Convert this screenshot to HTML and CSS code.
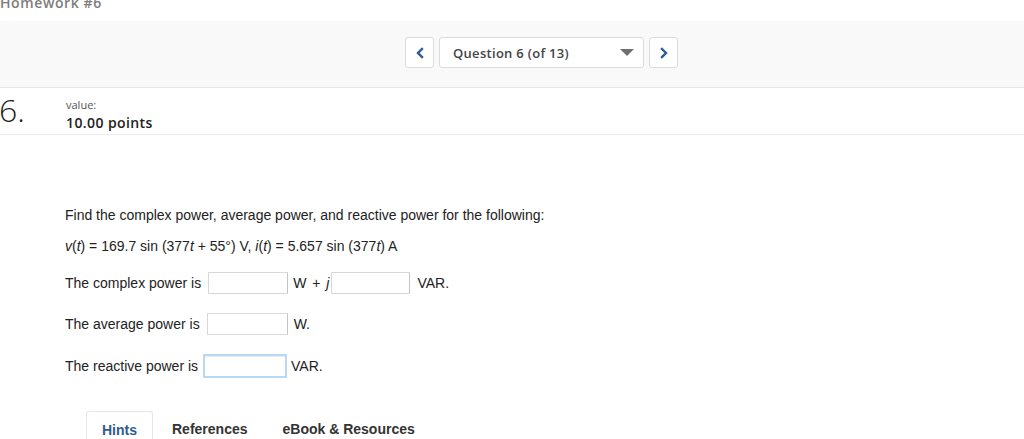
FILE: index.html
```html
<!DOCTYPE html>
<html>
<head>
<meta charset="utf-8">
<link rel="stylesheet" href="styles.css">
</head>
<body>
<div class="title"><span>Homework #6</span></div>
<div class="navband">
  <div class="nav">
    <button class="navbtn" aria-label="previous">
      <svg width="10" height="12" viewBox="0 0 10 12"><path d="M7 2 L3 6 L7 10" fill="none" stroke="#2b5c95" stroke-width="2.4" stroke-linecap="square"/></svg>
    </button>
    <div class="select">
      <span>Question 6 (of 13)</span>
      <svg class="caret" width="14" height="8" viewBox="0 0 14 8"><path d="M0 0 H14 L7 7 Z" fill="#6f6f6f"/></svg>
    </div>
    <button class="navbtn" aria-label="next">
      <svg width="10" height="12" viewBox="0 0 10 12"><path d="M3 2 L7 6 L3 10" fill="none" stroke="#2b5c95" stroke-width="2.4" stroke-linecap="square"/></svg>
    </button>
  </div>
</div>
<div class="qhead">
  <div class="qnum">6.</div>
  <div class="qval">
    <div class="vlabel">value:</div>
    <div class="points">10.00 points</div>
  </div>
</div>
<div class="qbody">
  <p class="line1">Find the complex power, average power, and reactive power for the following:</p>
  <p class="line2"><i>v</i>(<i>t</i>) = 169.7 sin (377<i>t</i> + 55°) V, <i>i</i>(<i>t</i>) = 5.657 sin (377<i>t</i>) A</p>
  <div class="row r1"><span>The complex power is</span><input class="inp c1"><span class="u1">W + <i>j</i></span><input class="inp c2"><span class="u2">VAR.</span></div>
  <div class="row r2"><span>The average power is</span><input class="inp a1"><span class="u3">W.</span></div>
  <div class="row r3"><span>The reactive power is</span><input class="inp focus"><span class="u4">VAR.</span></div>
</div>
<div class="tabs">
  <div class="tab active">Hints</div>
  <div class="tab">References</div>
  <div class="tab">eBook &amp; Resources</div>
</div>
</body>
</html>
```
FILE: styles.css
```css
html, body { margin: 0; padding: 0; background: #fff; }
body { font-family: "Liberation Sans", Arial, sans-serif; color: #222; width: 1024px; height: 439px; overflow: hidden; }
.title { height: 21px; overflow: hidden; }
.title span { display: block; margin-top: -6px; font-family: "Open Sans", sans-serif; font-weight: 600; font-size: 14px; line-height: 18px; color: #7d7d7d; letter-spacing: 0.6px; }
.navband { background: #f9f9f9; border-bottom: 1px solid #e6e6e6; height: 67px; box-sizing: border-box; padding-top: 16px; }
.nav { display: flex; gap: 5px; padding-left: 405px; }
.navbtn { width: 29px; height: 31px; box-sizing: border-box; border: 1px solid #dcdcdc; border-radius: 3px; background: #fff; display: flex; align-items: center; justify-content: center; padding: 0; }
.select { width: 205px; height: 31px; box-sizing: border-box; border: 1px solid #dcdcdc; border-radius: 3px; background: #fff; display: flex; align-items: center; justify-content: space-between; padding: 0 9px 0 13px; font-family: "Open Sans", sans-serif; font-weight: 600; font-size: 13px; color: #444; letter-spacing: 0.3px; }
.caret { margin-top: 1px; }
.qhead { display: flex; height: 47px; border-bottom: 1px solid #ececec; box-sizing: border-box; }
.qnum { width: 67px; font-family: "Open Sans", sans-serif; font-weight: 300; font-size: 32px; line-height: 40px; padding-top: 2px; margin-left: -1px; color: #222; }
.qval { padding-top: 11px; }
.vlabel { font-family: "Open Sans", sans-serif; font-size: 11px; line-height: 12px; color: #555; }
.points { font-family: "Open Sans", sans-serif; font-weight: 600; font-size: 14px; line-height: 18px; color: #222; letter-spacing: 0.4px; margin-top: 3px; }
.qbody { padding-left: 65px; padding-top: 72px; font-size: 14px; color: #222; }
.qbody p { margin: 0; line-height: 16px; }
.line2 { margin-top: 15px !important; }
.row { display: flex; align-items: center; height: 24px; }
.r1 { margin-top: 17px; }
.r2 { margin-top: 17px; }
.r3 { margin-top: 18px; }
.inp { height: 22px; box-sizing: border-box; border: 1px solid #d8d8d8; border-right-color: #c4c4c4; border-radius: 1px; background: #fff; padding: 0; margin: 0; font-size: 13px; }
.c1 { width: 80px; margin-left: 7px; }
.u1 { margin-left: 5px; word-spacing: 2px; }
.c2 { width: 79px; margin-left: 2px; }
.u2 { margin-left: 7px; }
.a1 { width: 81px; margin-left: 7px; }
.u3 { margin-left: 6px; }
.focus { width: 84px; height: 24px; margin-left: 5px; border: 2px solid #b8d8f5; box-shadow: inset 0 1px 1px rgba(0,0,0,0.08); }
.u4 { margin-left: 4px; }
.tabs { display: flex; padding-left: 86px; margin-top: 33px; }
.tab { font-weight: bold; font-size: 14px; color: #333; height: 30px; line-height: 36px; box-sizing: border-box; padding: 0 16px; margin-right: 3px; }
.tab.active { color: #2d5c8e; border: 1px solid #e6e6e6; border-bottom: none; border-radius: 3px 3px 0 0; padding: 0 15px; }
```
